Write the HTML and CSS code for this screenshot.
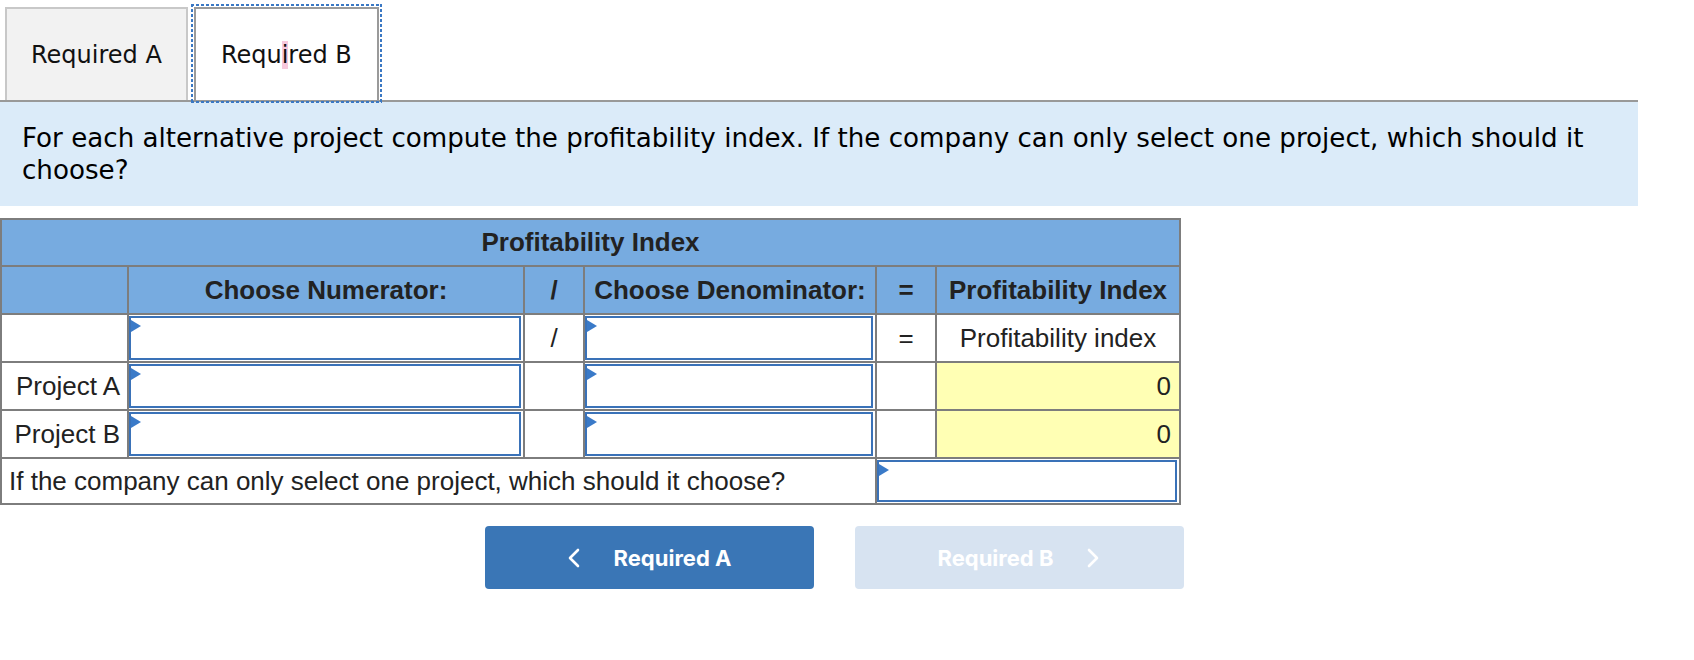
FILE: index.html
```html
<!DOCTYPE html>
<html lang="en">
<head>
<meta charset="utf-8">
<title>Profitability Index</title>
<link rel="stylesheet" href="styles.css">
</head>
<body>
<div class="page">
  <div class="tabs">
    <div class="tab">Required A</div>
    <div class="tab active">Requ<span class="caret">i</span>red B</div>
  </div>
  <div class="prompt">For each alternative project compute the profitability index. If the company can only select one project, which should it choose?</div>
  <table class="pi">
    <colgroup>
      <col class="c1"><col class="c2"><col class="c3"><col class="c4"><col class="c5"><col class="c6">
    </colgroup>
    <tr class="r1 head">
      <th colspan="6">Profitability Index</th>
    </tr>
    <tr class="r2 head">
      <th></th>
      <th>Choose Numerator:</th>
      <th>/</th>
      <th>Choose Denominator:</th>
      <th>=</th>
      <th>Profitability Index</th>
    </tr>
    <tr class="r3">
      <td></td>
      <td class="in"><div class="box"></div></td>
      <td class="mid">/</td>
      <td class="in"><div class="box"></div></td>
      <td class="mid">=</td>
      <td class="mid">Profitability index</td>
    </tr>
    <tr class="r4">
      <td class="lbl">Project A</td>
      <td class="in"><div class="box"></div></td>
      <td></td>
      <td class="in"><div class="box"></div></td>
      <td></td>
      <td class="val">0</td>
    </tr>
    <tr class="r5">
      <td class="lbl">Project B</td>
      <td class="in"><div class="box"></div></td>
      <td></td>
      <td class="in"><div class="box"></div></td>
      <td></td>
      <td class="val">0</td>
    </tr>
    <tr class="r6">
      <td colspan="4" class="q">If the company can only select one project, which should it choose?</td>
      <td colspan="2" class="in"><div class="box"></div></td>
    </tr>
  </table>
  <div class="nav">
    <div class="btn prev">
      <svg class="chev" width="14" height="20" viewBox="0 0 14 20"><polyline points="11,2 3,10 11,18" fill="none" stroke="#fff" stroke-width="2.6" stroke-linecap="round" stroke-linejoin="round"/></svg>
      <span>Required A</span>
    </div>
    <div class="btn next">
      <span>Required B</span>
      <svg class="chev" width="14" height="20" viewBox="0 0 14 20"><polyline points="3,2 11,10 3,18" fill="none" stroke="#fff" stroke-width="2.6" stroke-linecap="round" stroke-linejoin="round"/></svg>
    </div>
  </div>
</div>
</body>
</html>
```
FILE: styles.css
```css
html, body {
  margin: 0;
  padding: 0;
  background: #ffffff;
}

.page {
  width: 1694px;
}

.tabs {
  display: flex;
  align-items: flex-end;
  width: 1638px;
  box-sizing: border-box;
  padding: 7px 0 0 5px;
  border-bottom: 2px solid #999999;
}

.tab {
  position: relative;
  box-sizing: border-box;
  height: 93px;
  display: flex;
  align-items: center;
  padding: 0 24px;
  font-family: "DejaVu Sans", Verdana, sans-serif;
  font-size: 24px;
  color: #111111;
  background: #f2f2f2;
  border: 2px solid #c8c8c8;
  border-bottom: none;
}

.tab.active {
  background: #ffffff;
  border-color: #9a9a9a;
  margin-left: 6px;
  padding: 0 25px;
}

.tab.active::after {
  content: "";
  position: absolute;
  top: -5px;
  left: -5px;
  right: -5px;
  bottom: -3px;
  pointer-events: none;
  background:
    repeating-linear-gradient(90deg, #3b78c3 0 3px, transparent 3px 5px) top left / 100% 2px no-repeat,
    repeating-linear-gradient(90deg, #3b78c3 0 3px, transparent 3px 5px) bottom left / 100% 2px no-repeat,
    repeating-linear-gradient(180deg, #3b78c3 0 3px, transparent 3px 5px) top left / 2px 100% no-repeat,
    repeating-linear-gradient(180deg, #3b78c3 0 3px, transparent 3px 5px) top right / 2px 100% no-repeat;
}

.caret {
  background: #f7c8dc;
}

.prompt {
  width: 1638px;
  box-sizing: border-box;
  background: #dbebf9;
  padding: 20px 22px 20px 22px;
  font-family: "DejaVu Sans", Verdana, sans-serif;
  font-size: 26.15px;
  line-height: 32px;
  color: #000000;
}

.pi {
  margin-top: 12px;
  border-collapse: collapse;
  table-layout: fixed;
  width: 1179px;
  border: 2px solid #7d7d7d;
  font-family: "Liberation Sans", Arial, sans-serif;
  font-size: 26px;
  color: #222222;
}

.c1 { width: 127px; }
.c2 { width: 396px; }
.c3 { width: 60px; }
.c4 { width: 292px; }
.c5 { width: 60px; }
.c6 { width: 244px; }

.pi th,
.pi td {
  border: 2px solid #7d7d7d;
  padding: 0 8px;
  white-space: nowrap;
  overflow: hidden;
}

.head th {
  background: #77abe0;
  font-weight: bold;
  text-align: center;
}

.r1 { height: 47px; }
.r2 { height: 48px; }
.r3 { height: 48px; }
.r4 { height: 48px; }
.r5 { height: 48px; }
.r6 { height: 46px; }

.pi td.mid {
  text-align: center;
}

.pi td.lbl {
  text-align: right;
  padding-right: 7px;
}

.pi td.val {
  text-align: right;
  background: #ffffb4;
}

.pi td.q {
  text-align: left;
  padding-left: 7px;
}

.pi td.in {
  padding: 1px 2px 1px 0;
}

.box {
  position: relative;
  box-sizing: border-box;
  height: 44px;
  border: 2px solid #3a72b8;
  background: #ffffff;
}

.r6 .box {
  height: 42px;
}

.box::before {
  content: "";
  position: absolute;
  left: 0;
  top: 2px;
  border-left: 10px solid #3a7ac8;
  border-top: 6px solid transparent;
  border-bottom: 6px solid transparent;
}

.nav {
  width: 1668px;
  display: flex;
  justify-content: center;
  gap: 41px;
  margin-top: 21px;
}

.btn {
  box-sizing: border-box;
  width: 329px;
  height: 63px;
  border-radius: 4px;
  display: flex;
  align-items: center;
  justify-content: center;
  gap: 33px;
  font-family: Inter, Roboto, "Liberation Sans", sans-serif;
  font-weight: bold;
  font-size: 22px;
  color: #ffffff;
}

.btn.prev {
  background: #3a76b6;
}

.btn.next {
  background: #d7e3f1;
}

.chev {
  display: block;
}
```
